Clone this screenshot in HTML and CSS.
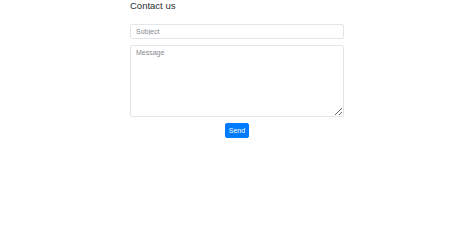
FILE: index.html
```html
<!DOCTYPE html>
<html lang="en">
<head>
<meta charset="utf-8">
<title>Contact us</title>
<link rel="stylesheet" href="styles.css">
</head>
<body>
<main class="container">
  <h2 class="title">Contact us</h2>
  <form class="contact-form">
    <input class="form-control" type="text" placeholder="Subject">
    <textarea class="form-control message" placeholder="Message"></textarea>
    <div class="actions">
      <button class="btn-send" type="button">Send</button>
    </div>
  </form>
</main>
</body>
</html>
```

FILE: styles.css
```css
html, body {
  margin: 0;
  padding: 0;
  background: #ffffff;
  font-family: "Liberation Sans", Arial, Helvetica, sans-serif;
  color: #212529;
}

.container {
  width: 214px;
  margin: 0 auto;
}

.title {
  margin: 0 0 12px 0;
  font-size: 9.5px;
  font-weight: 400;
  line-height: 12px;
  color: #2a2e33;
}

.contact-form {
  display: flex;
  flex-direction: column;
  gap: 6px;
}

.form-control {
  display: block;
  width: 100%;
  box-sizing: border-box;
  height: 15px;
  margin: 0;
  padding: 2px 5px;
  font-family: inherit;
  font-size: 7px;
  color: #495057;
  background: #fff;
  border: 1px solid #e3e6e9;
  border-radius: 2px;
  outline: none;
}

.form-control::placeholder {
  color: #868b90;
}

.message {
  height: 72px;
  padding-top: 3px;
  resize: vertical;
}

.actions {
  display: flex;
  justify-content: center;
}

.btn-send {
  width: 24px;
  height: 15px;
  padding: 0;
  font-family: inherit;
  font-size: 7px;
  color: #fff;
  background: #007bff;
  border: 1px solid #007bff;
  border-radius: 2px;
}
```
